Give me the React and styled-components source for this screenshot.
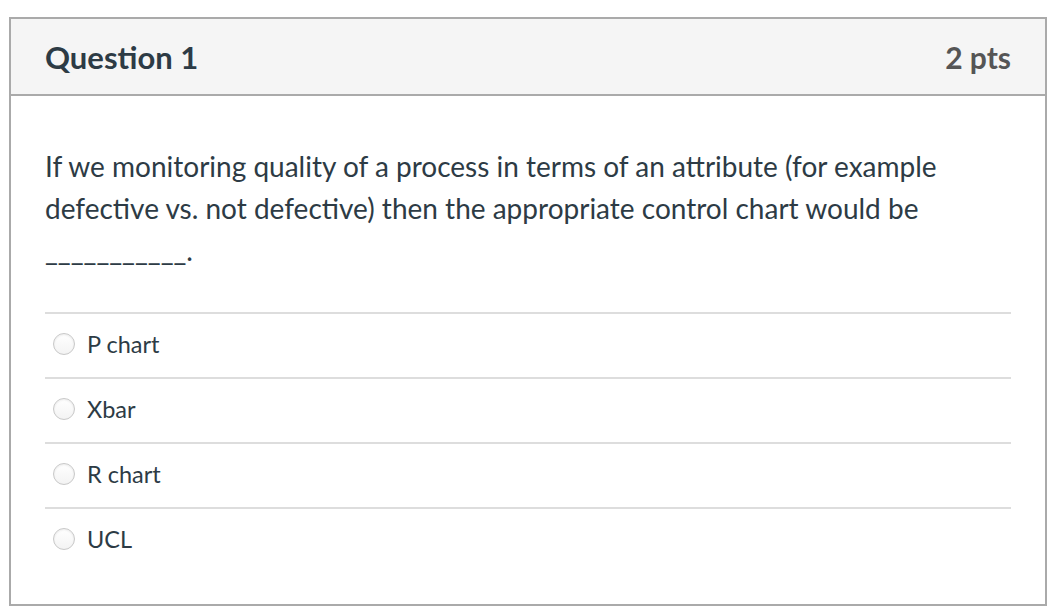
import React from 'react';
import styled, { createGlobalStyle } from 'styled-components';

const GlobalStyle = createGlobalStyle`
    body {
        margin: 0;
        background: #fff;
        font-family: Lato, 'Liberation Sans', sans-serif;
    }
`;

const Page = styled.div`
    padding: 17px 17px 9px 9px;
`;

const QuestionCard = styled.div`
    border: 2px solid #aaaaaa;
    height: 589px;
    box-sizing: border-box;
    display: flex;
    flex-direction: column;
`;

const Header = styled.div`
    display: flex;
    justify-content: space-between;
    align-items: center;
    height: 77px;
    padding: 0 34px 0 34px;
    background: #f5f5f5;
    border-bottom: 2px solid #aaaaaa;
    box-sizing: border-box;
`;

const Title = styled.h2`
    margin: 0;
    font-size: 31px;
    font-weight: 700;
    color: #2d3b45;
`;

const Points = styled.span`
    font-size: 30px;
    font-weight: 700;
    color: #555555;
`;

const Body = styled.div`
    padding: 49px 34px 0 34px;
`;

const Prompt = styled.p`
    margin: 0;
    font-size: 28px;
    line-height: 42px;
    color: #2d3b45;
`;

const Answers = styled.div`
    margin-top: 41px;
`;

const AnswerRow = styled.label`
    display: flex;
    align-items: center;
    gap: 12px;
    height: 63px;
    padding: 0 0 4px 8px;
    box-sizing: border-box;
    height: 65px;
    border-top: 2px solid #dddddd;
`;

const Radio = styled.span`
    width: 20px;
    height: 20px;
    border-radius: 50%;
    border: 1px solid #c8c8c8;
    background: linear-gradient(#ffffff, #f3f3f3);
    box-shadow: inset 0 1px 2px rgba(0, 0, 0, 0.08);
    flex-shrink: 0;
`;

const AnswerText = styled.span`
    font-size: 23.5px;
    color: #2d3b45;
`;

const answers = ['P chart', 'Xbar', 'R chart', 'UCL'];

export default function App() {
    return (
        <Page>
            <GlobalStyle />
            <QuestionCard>
                <Header>
                    <Title>Question 1</Title>
                    <Points>2 pts</Points>
                </Header>
                <Body>
                    <Prompt>
                        If we monitoring quality of a process in terms of an attribute (for example defective vs.
                        not defective) then the appropriate control chart would be
                        <br />
                        ___________.
                    </Prompt>
                    <Answers>
                        {answers.map((a) => (
                            <AnswerRow key={a}>
                                <Radio />
                                <AnswerText>{a}</AnswerText>
                            </AnswerRow>
                        ))}
                    </Answers>
                </Body>
            </QuestionCard>
        </Page>
    );
}
